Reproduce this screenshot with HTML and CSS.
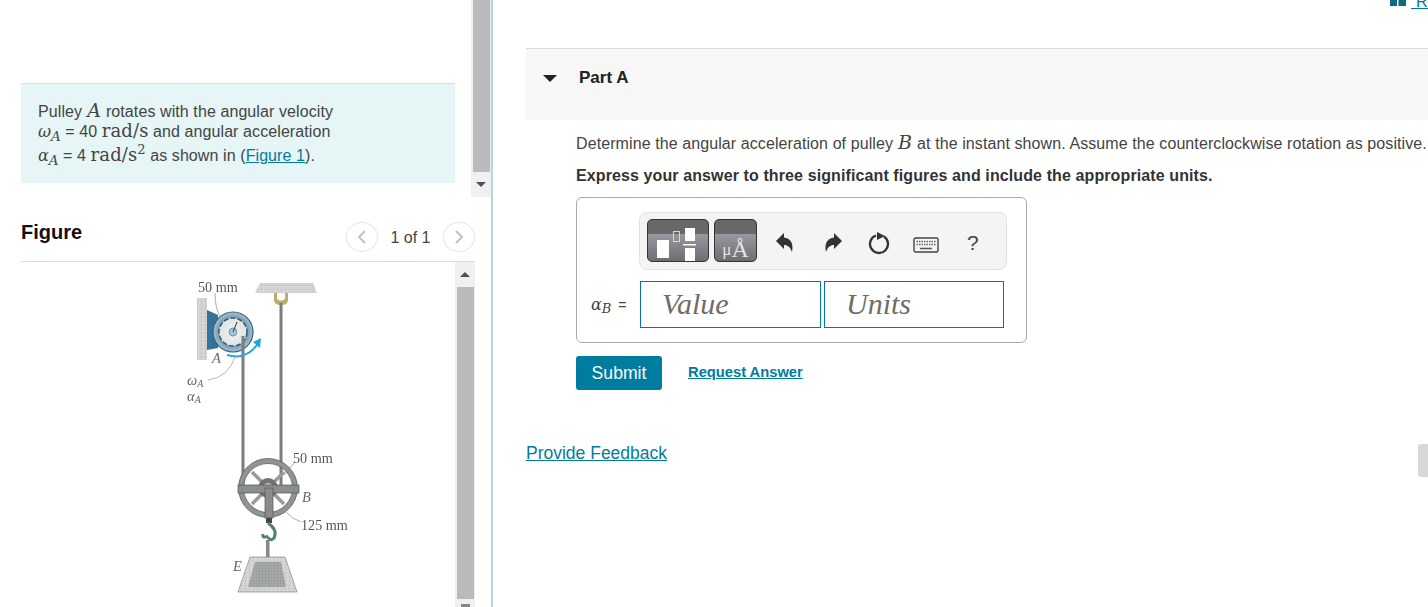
FILE: index.html
```html
<!DOCTYPE html>
<html lang="en">
<head>
<meta charset="utf-8">
<title>Part A</title>
<link rel="stylesheet" href="styles.css">
</head>
<body>
<div class="app">
  <aside class="left">
    <section class="intro">
      <div class="intro-main">
        <div class="info">
          <span class="line">Pulley <i class="mi">A</i> rotates with the angular velocity</span>
          <span class="line"><i class="mg">ω</i><sub class="mi-sub">A</sub> = 40 <span class="mr">rad/s</span> and angular acceleration</span>
          <span class="line line-last"><i class="mg">α</i><sub class="mi-sub">A</sub> = 4 <span class="mr">rad/s<sup class="mr-sup">2</sup></span> as shown in (<a href="#" class="link">Figure 1</a>).</span>
        </div>
      </div>
      <div class="scrollbar scrollbar-top">
        <div class="thumb thumb-top"></div>
        <div class="arrow-box"><span class="arrow-down"></span></div>
      </div>
    </section>
    <section class="figure">
      <header class="figure-head">
        <h2 class="figure-title">Figure</h2>
        <div class="pager">
          <span class="circle"><svg width="12" height="16" viewBox="0 0 12 16"><path d="M9 2 L3 8 L9 14" fill="none" stroke="#c2c2c2" stroke-width="2"/></svg></span>
          <span class="count">1 of 1</span>
          <span class="circle"><svg width="12" height="16" viewBox="0 0 12 16"><path d="M3 2 L9 8 L3 14" fill="none" stroke="#c2c2c2" stroke-width="2"/></svg></span>
        </div>
      </header>
      <div class="figure-body">
        <svg class="diagram" width="434" height="345" viewBox="21 262 434 345">
          <defs>
            <filter id="soft" x="-5%" y="-5%" width="110%" height="110%"><feGaussianBlur stdDeviation="0.6"/></filter>
            <radialGradient id="hubg"><stop offset="0" stop-color="#f2f4f3"/><stop offset="1" stop-color="#dfe3e2"/></radialGradient>
            <radialGradient id="pulg"><stop offset="0.6" stop-color="#5f8fae"/><stop offset="1" stop-color="#a8c2d2"/></radialGradient>
            <pattern id="speck" width="4" height="4" patternUnits="userSpaceOnUse"><rect width="4" height="4" fill="#d2d2d2"/><rect x="1" y="1" width="1" height="1" fill="#bbb"/><rect x="3" y="2" width="1" height="1" fill="#e6e6e6"/></pattern>
            <pattern id="speck2" width="3" height="3" patternUnits="userSpaceOnUse"><rect width="3" height="3" fill="#a3a7a5"/><rect x="1" y="1" width="1" height="1" fill="#8f9391"/></pattern>
          </defs>
          <g filter="url(#soft)">
            <path d="M255 293 L260 283 H313 L317 293 Z" fill="url(#speck)"/>
            <path d="M274 293 V300 Q274 305 281 305 Q288 305 288 300 V293 H285 V299 Q281 302 277 299 V293 Z" fill="#b9ae6d"/>
            <rect x="197" y="298" width="10" height="62" fill="url(#speck)"/>
            <path d="M207 310 L218 315 V348 L207 350 Z" fill="#35739a"/>
            <rect x="279.500" y="303" width="3" height="190" fill="#7d7d79"/>
            <circle cx="233" cy="332" r="20" fill="url(#pulg)" stroke="#35617c" stroke-width="1.200"/>
            <circle cx="233" cy="332" r="14" fill="url(#hubg)" stroke="#3b5a6c" stroke-width="1.500" stroke-dasharray="5 2"/>
            <circle cx="233" cy="332" r="4" fill="#9fc4d8" stroke="#6f9ab2"/>
            <path d="M233 332 L237 322" stroke="#333" stroke-width="1" fill="none"/>
            <rect x="241.500" y="336" width="3" height="150" fill="#7d7d79"/>
            <path d="M227 355 Q247 361 259 342" fill="none" stroke="#28a5dc" stroke-width="2"/>
            <path d="M261 338 L260 348 L253 342 Z" fill="#28a5dc"/>
            <path d="M208 380 Q228 378 236 355" fill="none" stroke="#999" stroke-width="0.700"/>
            <path d="M215 293 Q215 308 220 316" fill="none" stroke="#888" stroke-width="0.700"/>
            <circle cx="268" cy="488" r="27" fill="none" stroke="#8f9593" stroke-width="5"/>
            <circle cx="268" cy="488" r="29.500" fill="none" stroke="#555" stroke-width="0.700"/>
            <circle cx="268" cy="488" r="24.500" fill="none" stroke="#555" stroke-width="0.700"/>
            <path d="M252 472 L284 504 M284 472 L252 504" stroke="#969c9a" stroke-width="3.500"/>
            <circle cx="268" cy="488" r="10" fill="#6f7371"/>
            <circle cx="268" cy="488" r="5" fill="#c4c4c4"/>
            <rect x="238" y="485" width="61" height="8" fill="#8b908e" stroke="#555" stroke-width="0.700"/>
            <rect x="265" y="488" width="8" height="30" fill="#888d8b" stroke="#555" stroke-width="0.700"/>
            <rect x="266" y="518" width="6" height="5" fill="#444"/>
            <path d="M268 523 Q278 530 274 538 Q270 542 268 537" fill="none" stroke="#4f7f78" stroke-width="3"/>
            <path d="M268 536 Q262 539 263 534" fill="none" stroke="#4f7f78" stroke-width="3"/>
            <rect x="266" y="540" width="3.500" height="17" fill="#888"/>
            <path d="M250 557 H285 L297 592 H238 Z" fill="url(#speck)" stroke="#777" stroke-width="0.600"/>
            <path d="M255 562 H281 L286 587 H248 Z" fill="url(#speck2)"/>
            <path d="M284 475 L294 463 M285 511 Q292 519 301 522" fill="none" stroke="#888" stroke-width="0.700"/>
            <text x="198" y="292" class="dim">50 mm</text>
            <text x="212" y="363" class="dim-i">A</text>
            <text x="187" y="385" class="dim-i">ω<tspan class="dim-sub" dy="2">A</tspan></text>
            <text x="187" y="401" class="dim-i">α<tspan class="dim-sub" dy="2">A</tspan></text>
            <text x="293" y="463" class="dim">50 mm</text>
            <text x="302" y="502" class="dim-i">B</text>
            <text x="301" y="530" class="dim">125 mm</text>
            <text x="233" y="571" class="dim-i">E</text>
          </g>
        </svg>
        <div class="scrollbar scrollbar-fig">
          <div class="arrow-box arrow-box-up"><span class="arrow-up"></span></div>
          <div class="thumb thumb-fig"></div>
          <div class="arrow-stub"></div>
        </div>
      </div>
    </section>
  </aside>

  <main class="right">
    <div class="topbar">
      <svg class="book" width="16" height="7" viewBox="0 0 16 7"><path d="M0 0 H7 V6 H0 Z M8.500 0 H16 V6 H8.500 Z" fill="#0d6a80"/></svg>
      <a href="#" class="top-link">R</a>
    </div>
    <div class="part-head">
      <span class="caret"></span>
      <h3 class="part-title">Part A</h3>
    </div>
    <div class="part-body">
      <p class="question">Determine the angular acceleration of pulley <i class="mi">B</i> at the instant shown. Assume the counterclockwise rotation as positive.</p>
      <p class="instr">Express your answer to three significant figures and include the appropriate units.</p>
      <div class="answer">
        <div class="toolbar">
          <button class="tpl tpl-wide" type="button">
            <svg width="60" height="41" viewBox="0 0 60 41">
              <rect x="9" y="20" width="12" height="18" fill="#fff"/>
              <rect x="25.500" y="11.500" width="6" height="10" fill="none" stroke="#d8d8d8"/>
              <rect x="37" y="8" width="10" height="13" fill="#fff"/>
              <rect x="35" y="24" width="13" height="1.500" fill="#fff"/>
              <rect x="37" y="28" width="10" height="13" fill="#fff"/>
            </svg>
          </button>
          <button class="tpl tpl-narrow" type="button"><span class="tpl-mu">μ</span><span class="tpl-a">Å</span></button>
          <div class="tools">
            <svg class="tool" width="20" height="22" viewBox="776 232 20 22"><path d="M777 241 L785 233 V237.500 C791 238 795 243 793 252 C791 247 789 245 785 245 V249 Z" fill="#333"/></svg>
            <svg class="tool" width="20" height="22" viewBox="824 232 20 22"><path d="M843 241 L835 233 V237.500 C829 238 825 243 827 252 C829 247 831 245 835 245 V249 Z" fill="#333"/></svg>
            <svg class="tool" width="22" height="24" viewBox="868 231 22 24"><path d="M884 236.500 A9 9 0 1 1 876 235.500" fill="none" stroke="#333" stroke-width="2.300"/><path d="M877 232 L885 236 L877 240 Z" fill="#333"/></svg>
            <svg class="tool tool-kbd" width="26" height="16" viewBox="0 0 26 16"><rect x="1" y="1" width="24" height="14" rx="1.500" fill="#f4f4f4" stroke="#444" stroke-width="1.400"/><path d="M3.500 4.500 H22.500 M3.500 7.500 H22.500" stroke="#666" stroke-width="1.500" stroke-dasharray="1.500 1"/><path d="M7 11.500 H19" stroke="#555" stroke-width="1.500"/></svg>
            <span class="tool-help">?</span>
          </div>
        </div>
        <div class="answer-row">
          <span class="var"><i class="mg">α</i><sub class="mi-sub">B</sub> =</span>
          <div class="field">Value</div>
          <div class="field">Units</div>
        </div>
      </div>
      <div class="actions">
        <button class="submit" type="button">Submit</button>
        <a href="#" class="request">Request Answer</a>
      </div>
    </div>
    <a href="#" class="feedback">Provide Feedback</a>
    <div class="side-tab"></div>
  </main>
</div>
</body>
</html>
```

FILE: styles.css
```css
* { box-sizing: border-box; }
html, body { margin: 0; padding: 0; height: 607px; overflow: hidden; background: #fff; }
body { font-family: "Liberation Sans", Arial, sans-serif; font-size: 16px; color: #444; }
.app { display: flex; width: 1428px; height: 607px; overflow: hidden; position: relative; }

.left { width: 493px; flex: none; border-right: 2px solid #bcd0e6; display: flex; flex-direction: column; }
.intro { display: flex; height: 197px; flex: none; }
.intro-main { flex: 1; padding: 83px 16px 0 21px; }
.info { background: #e6f5f6; border-top: 1px solid #dcdcdc; height: 100px; padding: 18px 17px 0; }
.line { display: block; line-height: 20px; white-space: nowrap; letter-spacing: 0.09px; }
.line-last { margin-top: 4px; }
.mi { font-family: "DejaVu Serif", serif; font-style: italic; font-size: 19px; line-height: 0; margin: 0 0.500px; letter-spacing: 0; }
.mg { font-family: "DejaVu Serif", serif; font-style: italic; font-size: 16px; line-height: 0; letter-spacing: 0; }
.mi-sub { font-family: "DejaVu Serif", serif; font-style: italic; font-size: 13.500px; line-height: 0; vertical-align: -4px; letter-spacing: 0; }
.mr { font-family: "DejaVu Serif", serif; font-size: 18px; line-height: 0; letter-spacing: 0.1px; color: #444; }
.mr-sup { font-size: 13px; line-height: 0; vertical-align: 7px; }
.link { color: #007c9e; }

.scrollbar { width: 20px; flex: none; background: #f0f0f0; display: flex; flex-direction: column; align-items: center; }
.thumb { width: 17px; background: #bababa; }
.thumb-top { height: 172px; }
.arrow-box { height: 24px; width: 100%; display: flex; align-items: center; justify-content: center; }
.arrow-box-up { height: 25px; }
.arrow-down { border: 5px solid transparent; border-top: 5px solid #505050; border-bottom: 0; }
.arrow-up { border: 5px solid transparent; border-bottom: 5px solid #505050; border-top: 0; }
.thumb-fig { height: 312px; }
.arrow-stub { margin-top: 5px; width: 9px; height: 3px; background: #888; }

.figure { flex: 1; padding: 0 16px 0 21px; min-height: 0; }
.figure-head { height: 65px; border-bottom: 1px solid #dcdcdc; display: flex; justify-content: space-between; align-items: flex-start; padding-top: 23px; }
.figure-title { margin: 0; font-size: 20px; line-height: 24px; font-weight: bold; color: #111; }
.pager { display: flex; align-items: center; }
.circle { width: 32px; height: 30px; border: 1px solid #e4e4e4; border-radius: 50%; display: flex; align-items: center; justify-content: center; }
.count { width: 65px; text-align: center; line-height: 30px; padding-top: 3px; }
.figure-body { display: flex; height: 345px; }
.diagram { flex: none; display: block; }
.dim { font-family: "Liberation Serif", serif; font-size: 14.200px; fill: #555; }
.dim-i { font-family: "Liberation Serif", serif; font-style: italic; font-size: 14.500px; fill: #666; }
.dim-sub { font-size: 10px; }

.right { flex: 1; min-width: 0; padding-left: 33px; }
.topbar { height: 48px; display: flex; justify-content: flex-end; align-items: flex-start; overflow: hidden; }
.book { display: block; flex: none; }
.top-link { flex: none; box-sizing: content-box; width: 12px; height: 15px; margin: -7px 0 0 5px; padding-left: 5px; border-bottom: 1px solid #007c9e; color: #007c9e; font-size: 16px; line-height: 18px; text-decoration: none; }
.part-head { height: 72px; background: #f7f7f7; border-top: 1px solid #dcdcdc; display: flex; align-items: flex-start; padding: 19px 0 0 17px; }
.caret { border: 7px solid transparent; border-top: 7px solid #222; border-bottom: 0; margin-top: 7px; }
.part-title { margin: 0 0 0 22px; font-size: 17px; line-height: 20px; font-weight: bold; color: #222; }
.part-body { padding-left: 50px; }
.question { margin: 14px 0 0; line-height: 20px; white-space: nowrap; letter-spacing: 0.09px; }
.instr { margin: 12px 0 0; line-height: 20px; font-weight: bold; color: #333; white-space: nowrap; letter-spacing: 0.107px; }
.answer { margin-top: 11px; width: 451px; height: 146px; border: 1px solid #aaa; border-radius: 6px; padding: 14px 0 0 62px; }
.toolbar { width: 368px; height: 58px; background: #f4f4f4; border: 1px solid #e2e2e2; border-radius: 8px; display: flex; align-items: flex-start; padding: 6px 0 0 7px; }
.tpl { padding: 0; margin: 0; height: 43px; border: 1px solid #333; border-radius: 5px; background: linear-gradient(#686868 0, #686868 14px, #99989f 14px, #6e6d72 100%); overflow: hidden; }
.tpl svg { display: block; }
.tpl-wide { width: 62px; }
.tpl-narrow { width: 43px; margin-left: 5px; font-family: "Liberation Serif", serif; color: #e4e4e4; font-size: 24px; line-height: 24px; display: flex; align-items: flex-end; justify-content: center; }
.tpl-mu { font-size: 17px; line-height: 22px; }
.tools { display: flex; align-items: center; margin-left: 18px; height: 48px; }
.tool { display: block; flex: none; }
.tools .tool:nth-child(2) { margin-left: 28px; }
.tools .tool:nth-child(3) { margin-left: 25px; }
.tools .tool-kbd { margin-left: 23px; margin-top: 4px; }
.tool-help { margin-left: 28px; font-size: 21px; color: #444; line-height: 24px; }
.answer-row { display: flex; align-items: stretch; margin: 11px 0 0 -62px; height: 47px; }
.var { width: 63px; padding-left: 14px; font-size: 14px; display: flex; align-items: center; white-space: pre; }
.var .mg { font-size: 16px; }
.var .mi-sub { font-size: 13px; margin-right: 3px; vertical-align: baseline; position: relative; top: 4px; line-height: 1; }
.field { width: 181px; border: 1px solid #007a9c; margin-right: 3px; padding-left: 21px; font-family: "Liberation Serif", serif; font-style: italic; font-size: 30px; line-height: 44px; color: #706c68; }
.field + .field { width: 180px; margin-right: 0; }
.actions { display: flex; align-items: center; margin-top: 13px; height: 34px; }
.submit { width: 86px; height: 34px; border: 0; padding: 0; background: #007c9e; color: #fff; border-radius: 3px; font-family: "Liberation Sans", Arial, sans-serif; font-size: 17.600px; }
.request { margin: -2px 0 0 26px; color: #007c9e; font-weight: bold; font-size: 14.720px; }
.feedback { display: block; width: max-content; margin-top: 53px; color: #007c9e; font-size: 17.500px; line-height: 20px; }
.side-tab { position: absolute; right: 0; top: 444px; width: 10px; height: 33px; background: #d8d8d8; border-radius: 3px 0 0 3px; }
```
